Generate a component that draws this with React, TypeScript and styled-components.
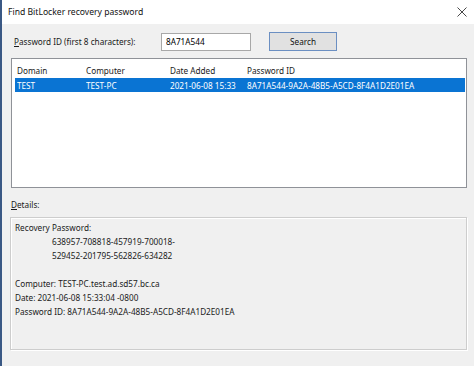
import React from 'react';
import styled, { createGlobalStyle } from 'styled-components';

const GlobalStyle = createGlobalStyle`
  html, body {
    margin: 0;
    padding: 0;
    background: #f0f0f0;
  }
  body {
    font-family: "Noto Sans", "DejaVu Sans", sans-serif;
    font-size: 8.2px;
    color: #1a1a1a;
  }
`;

const Window = styled.div`
  width: 474px;
  height: 366px;
  display: flex;
  flex-direction: column;
  border-left: 2px solid #3a5884;
  box-sizing: border-box;
  background: #f0f0f0;
  overflow: hidden;
`;

const TitleBar = styled.div`
  height: 24px;
  flex: none;
  display: flex;
  align-items: center;
  justify-content: space-between;
  padding: 0 7px 0 6px;
  background: #ffffff;
`;

const Title = styled.span`
  font-size: 8.6px;
  color: #111;
`;

const Body = styled.div`
  flex: 1;
  display: flex;
  flex-direction: column;
  padding: 8px 7px 0 9px;
`;

const SearchRow = styled.div`
  display: flex;
  align-items: center;
  height: 19px;
`;

const Label = styled.label`
  width: 150px;
  padding-left: 3px;
  box-sizing: border-box;
`;

const Key = styled.span`
  text-decoration: underline;
`;

const TextInput = styled.input`
  width: 90px;
  height: 18px;
  box-sizing: border-box;
  border: 1px solid #a8a8a8;
  background: #fff;
  font: inherit;
  padding: 0 0 0 4px;
  outline: none;
`;

const Button = styled.button`
  margin-left: 18px;
  width: 68px;
  height: 19px;
  box-sizing: border-box;
  border: 1px solid #6b8fc2;
  background: #e1e1e1;
  font: inherit;
  color: #111;
  padding: 0;
`;

const ListBox = styled.div`
  margin-top: 7px;
  height: 130px;
  box-sizing: border-box;
  border: 1px solid #8f9298;
  background: #fff;
  padding: 0 0 0 3px;
  flex: none;
`;

const Row = styled.div<{ $header?: boolean; $selected?: boolean }>`
  display: grid;
  grid-template-columns: 69px 84px 77px 1fr;
  align-items: center;
  height: ${({ $header }) => ($header ? '19px' : '14px')};
  box-sizing: border-box;
  padding: ${({ $header }) => ($header ? '3px 0 0 2px' : '0 0 0 2px')};
  margin-right: 1px;
  background: ${({ $selected }) => ($selected ? '#0a74d3' : 'transparent')};
  color: ${({ $selected }) => ($selected ? '#ffffff' : '#1a1a1a')};
`;

const Cell = styled.span`
  white-space: nowrap;
  overflow: hidden;
`;

const DetailsLabel = styled.div`
  margin-top: 10px;
  height: 13px;
  line-height: 13px;
`;

const DetailsBox = styled.div`
  margin-top: 6px;
  margin-left: -1px;
  height: 133px;
  flex: none;
  box-sizing: border-box;
  border: 1px solid #cdcdcd;
  box-shadow: 1px 1px 0 #ffffff, inset 1px 1px 0 #ffffff;
  padding: 3px 4px;
  line-height: 14px;
`;

const Line = styled.div<{ $indent?: boolean }>`
  height: 14px;
  padding-left: ${({ $indent }) => ($indent ? '37px' : '0')};
`;

const CloseIcon = () => (
  <svg width="10" height="10" viewBox="0 0 10 10">
    <path d="M0.5 0.5 L9.5 9.5 M9.5 0.5 L0.5 9.5" stroke="#333" strokeWidth="0.9" fill="none" />
  </svg>
);

const columns = ['Domain', 'Computer', 'Date Added', 'Password ID'];
const result = ['TEST', 'TEST-PC', '2021-06-08 15:33', '8A71A544-9A2A-48B5-A5CD-8F4A1D2E01EA'];

export default function App() {
  return (
    <>
      <GlobalStyle />
      <Window>
        <TitleBar>
          <Title>Find BitLocker recovery password</Title>
          <CloseIcon />
        </TitleBar>
        <Body>
          <SearchRow>
            <Label>
              <Key>P</Key>assword ID (first 8 characters):
            </Label>
            <TextInput defaultValue="8A71A544" />
            <Button>Search</Button>
          </SearchRow>
          <ListBox>
            <Row $header>
              {columns.map((c) => (
                <Cell key={c}>{c}</Cell>
              ))}
            </Row>
            <Row $selected>
              {result.map((c) => (
                <Cell key={c}>{c}</Cell>
              ))}
            </Row>
          </ListBox>
          <DetailsLabel>
            <Key>D</Key>etails:
          </DetailsLabel>
          <DetailsBox>
            <Line>Recovery Password:</Line>
            <Line $indent>638957-708818-457919-700018-</Line>
            <Line $indent>529452-201795-562826-634282</Line>
            <Line />
            <Line>Computer: TEST-PC.test.ad.sd57.bc.ca</Line>
            <Line>Date: 2021-06-08 15:33:04 -0800</Line>
            <Line>Password ID: 8A71A544-9A2A-48B5-A5CD-8F4A1D2E01EA</Line>
          </DetailsBox>
        </Body>
      </Window>
    </>
  );
}
